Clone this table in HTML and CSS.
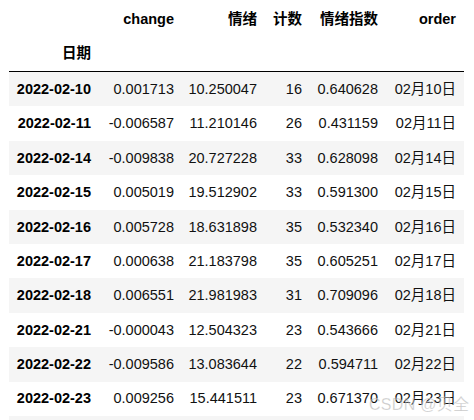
FILE: index.html
```html
<!DOCTYPE html>
<html lang="zh">
<head>
<meta charset="utf-8">
<link rel="stylesheet" href="styles.css">
</head>
<body>
<div class="wrap">
<table class="df">
<colgroup>
<col class="c0"><col class="c1"><col class="c2"><col class="c3"><col class="c4"><col class="c5">
</colgroup>
<thead>
<tr class="h1"><th></th><th>change</th><th>情绪</th><th>计数</th><th>情绪指数</th><th>order</th></tr>
<tr class="h2"><th>日期</th><th></th><th></th><th></th><th></th><th></th></tr>
</thead>
<tbody>
<tr><th>2022-02-10</th><td>0.001713</td><td>10.250047</td><td>16</td><td>0.640628</td><td>02月10日</td></tr>
<tr><th>2022-02-11</th><td>-0.006587</td><td>11.210146</td><td>26</td><td>0.431159</td><td>02月11日</td></tr>
<tr><th>2022-02-14</th><td>-0.009838</td><td>20.727228</td><td>33</td><td>0.628098</td><td>02月14日</td></tr>
<tr><th>2022-02-15</th><td>0.005019</td><td>19.512902</td><td>33</td><td>0.591300</td><td>02月15日</td></tr>
<tr><th>2022-02-16</th><td>0.005728</td><td>18.631898</td><td>35</td><td>0.532340</td><td>02月16日</td></tr>
<tr><th>2022-02-17</th><td>0.000638</td><td>21.183798</td><td>35</td><td>0.605251</td><td>02月17日</td></tr>
<tr><th>2022-02-18</th><td>0.006551</td><td>21.981983</td><td>31</td><td>0.709096</td><td>02月18日</td></tr>
<tr><th>2022-02-21</th><td>-0.000043</td><td>12.504323</td><td>23</td><td>0.543666</td><td>02月21日</td></tr>
<tr><th>2022-02-22</th><td>-0.009586</td><td>13.083644</td><td>22</td><td>0.594711</td><td>02月22日</td></tr>
<tr><th>2022-02-23</th><td>0.009256</td><td>15.441511</td><td>23</td><td>0.671370</td><td>02月23日</td></tr>
<tr class="tail"><th></th><td></td><td></td><td></td><td></td><td></td></tr>
</tbody>
</table>
<div class="mark">CSDN @贝全</div>
</div>
</body>
</html>
```

FILE: styles.css
```css
html, body {
  margin: 0;
  padding: 0;
  background: #fff;
  overflow: hidden;
}

.wrap {
  position: relative;
  padding: 2px 0 0 9px;
  font-family: "Liberation Sans", Arial, "Noto Sans CJK SC", sans-serif;
  font-size: 14.5px;
  color: #111;
}

.df {
  border-collapse: collapse;
  border-spacing: 0;
  table-layout: fixed;
  width: 455px;
}

.c0 { width: 90px; }
.c1 { width: 83px; }
.c2 { width: 83px; }
.c3 { width: 45px; }
.c4 { width: 76px; }
.c5 { width: 78px; }

.df th,
.df td {
  padding: 0 8px 0 0;
  text-align: right;
  vertical-align: middle;
  white-space: nowrap;
  line-height: 1;
}

.df thead th {
  font-weight: bold;
  color: #000;
}

.df thead tr.h1 th { height: 34px; }
.df thead tr.h2 th { height: 35px; }

.df thead {
  border-bottom: 1px solid #000;
}

.df tbody th {
  font-weight: bold;
  color: #000;
}

.df tbody td,
.df tbody th {
  height: 34.4px;
}

.df tbody tr.tail td,
.df tbody tr.tail th {
  height: 10px;
}

.df tbody tr:nth-child(odd) {
  background: #f5f5f5;
}

.mark {
  position: absolute;
  left: 369px;
  top: 391px;
  font-family: "Liberation Sans", "Noto Sans CJK SC", sans-serif;
  font-size: 16px;
  color: rgba(150, 150, 150, 0.5);
  -webkit-text-stroke: 0.4px rgba(255, 255, 255, 0.6);
  letter-spacing: 0.3px;
}
```
